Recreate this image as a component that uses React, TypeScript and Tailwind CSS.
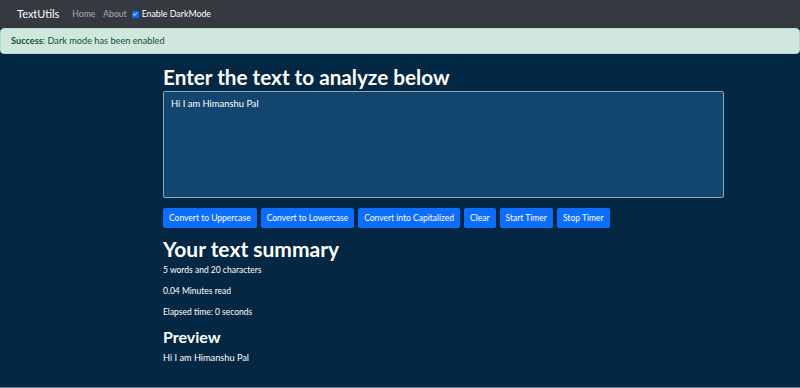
import React from "react";

export default function App() {
  const font = { fontFamily: 'Lato, "Noto Sans", sans-serif' };
  return (
    <div className="h-[388px] bg-[#042743] text-white border-b border-[#6b8294]" style={font}>
      <nav className="h-[28px] bg-[#343a40] flex items-center pl-[17px]">
        <span className="text-[11px] text-white mr-[13px]">TextUtils</span>
        <span className="text-[8.6px] text-white/55 mr-[8px]">Home</span>
        <span className="text-[8.6px] text-white/55 mr-[5px]">About</span>
        <span className="w-[7px] h-[7px] bg-[#0d6efd] rounded-[1.5px] mr-[3px] flex items-center justify-center">
          <svg viewBox="0 0 10 10" className="w-[6px] h-[6px]"><path d="M2 5.2 L4.2 7.3 L8 2.8" stroke="white" strokeWidth="1.6" fill="none" /></svg>
        </span>
        <span className="text-[8.8px] text-white">Enable DarkMode</span>
      </nav>
      <div className="h-[26px] bg-[#d1e7dd] border border-[#badbcc] rounded-[4px] flex items-center pl-[10px] text-[9.2px] text-[#0f5132]">
        <strong className="font-bold">Success</strong>: Dark mode has been enabled
      </div>
      <div className="pl-[163px] w-[724px]">
        <h1 className="text-[20.7px] font-bold leading-[28px] mt-[9px]">Enter the text to analyze below</h1>
        <div className="h-[107px] bg-[#13466e] border border-[#8fa9c0] rounded-[2px] px-[7px] py-[5px] text-[9.4px] leading-[13px]">Hi I am Himanshu Pal</div>
        <div className="flex gap-[4px] mt-[10px]">
          {["Convert to Uppercase", "Convert to Lowercase", "Convert into Capitalized", "Clear", "Start Timer", "Stop Timer"].map((t) => (
            <button key={t} className="h-[20px] px-[6px] bg-[#0d6efd] rounded-[2px] text-[8.5px] text-white">{t}</button>
          ))}
        </div>
        <h2 className="text-[21px] font-bold leading-[26px] mt-[8px]">Your text summary</h2>
        <p className="text-[8.5px] leading-[13px] mt-[1.5px]">5 words and 20 characters</p>
        <p className="text-[8.5px] leading-[13px] mt-[8px]">0.04 Minutes read</p>
        <p className="text-[8.5px] leading-[13px] mt-[8px]">Elapsed time: 0 seconds</p>
        <h2 className="text-[16px] font-bold leading-[22px] mt-[7.5px]">Preview</h2>
        <p className="text-[9.2px] leading-[13px] mt-[2.5px]">Hi I am Himanshu Pal</p>
      </div>
    </div>
  );
}
